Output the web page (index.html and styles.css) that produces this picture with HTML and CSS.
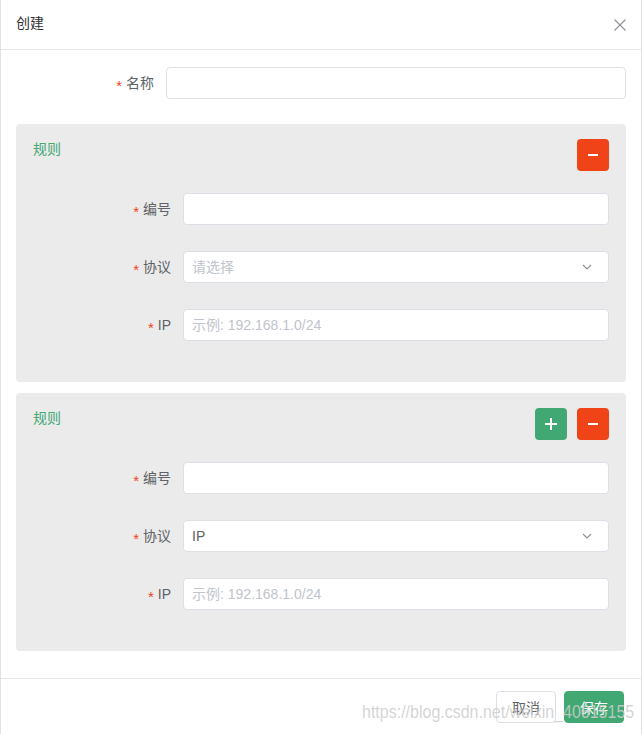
FILE: index.html
```html
<!DOCTYPE html>
<html lang="zh-CN">
<head>
<meta charset="utf-8">
<title>创建</title>
<link rel="stylesheet" href="styles.css">
</head>
<body>
<div class="dialog">
  <div class="dialog-header">
    <span class="dialog-title">创建</span>
    <span class="close" aria-label="关闭">
      <svg width="12" height="12" viewBox="0 0 12 12"><path d="M0.5 0.5 L11.5 11.5 M11.5 0.5 L0.5 11.5" stroke="#909399" stroke-width="1.2" fill="none"/></svg>
    </span>
  </div>
  <div class="dialog-body">
    <div class="form-item top-item">
      <label class="label"><span class="req">*</span><span>名称</span></label>
      <div class="control"><div class="input"></div></div>
    </div>

    <div class="card">
      <div class="card-head">
        <span class="card-title">规则</span>
        <div class="card-actions">
          <span class="btn-icon danger"><svg width="12" height="12" viewBox="0 0 12 12"><path d="M1 6 H11" stroke="#fff" stroke-width="2"/></svg></span>
        </div>
      </div>
      <div class="form-item">
        <label class="label"><span class="req">*</span><span>编号</span></label>
        <div class="control"><div class="input"></div></div>
      </div>
      <div class="form-item">
        <label class="label"><span class="req">*</span><span>协议</span></label>
        <div class="control"><div class="input select"><span class="placeholder">请选择</span><svg class="chev" width="10" height="6" viewBox="0 0 10 6"><path d="M1 1 L5 5 L9 1" stroke="#909399" stroke-width="1.2" fill="none"/></svg></div></div>
      </div>
      <div class="form-item">
        <label class="label"><span class="req">*</span><span>IP</span></label>
        <div class="control"><div class="input"><span class="placeholder">示例: 192.168.1.0/24</span></div></div>
      </div>
    </div>

    <div class="card">
      <div class="card-head">
        <span class="card-title">规则</span>
        <div class="card-actions">
          <span class="btn-icon success"><svg width="12" height="12" viewBox="0 0 12 12"><path d="M0 6 H12 M6 0 V12" stroke="#fff" stroke-width="2"/></svg></span>
          <span class="btn-icon danger"><svg width="12" height="12" viewBox="0 0 12 12"><path d="M1 6 H11" stroke="#fff" stroke-width="2"/></svg></span>
        </div>
      </div>
      <div class="form-item">
        <label class="label"><span class="req">*</span><span>编号</span></label>
        <div class="control"><div class="input"></div></div>
      </div>
      <div class="form-item">
        <label class="label"><span class="req">*</span><span>协议</span></label>
        <div class="control"><div class="input select"><span class="value">IP</span><svg class="chev" width="10" height="6" viewBox="0 0 10 6"><path d="M1 1 L5 5 L9 1" stroke="#909399" stroke-width="1.2" fill="none"/></svg></div></div>
      </div>
      <div class="form-item">
        <label class="label"><span class="req">*</span><span>IP</span></label>
        <div class="control"><div class="input"><span class="placeholder">示例: 192.168.1.0/24</span></div></div>
      </div>
    </div>
  </div>
  <div class="dialog-footer">
    <button class="btn">取消</button>
    <button class="btn primary">保存</button>
  </div>
  <div class="watermark">https://blog.csdn.net/weixin_40615155</div>
</div>
</body>
</html>
```

FILE: styles.css
```css
* { box-sizing: border-box; }
html, body {
  margin: 0;
  padding: 0;
  background: #fff;
}
body {
  font-family: "Liberation Sans", "Noto Sans CJK SC", sans-serif;
  font-size: 14px;
  color: #606266;
}
.dialog {
  position: relative;
  width: 642px;
  min-height: 760px;
  border: 1px solid #e2e2e2;
  border-top: none;
  border-bottom: none;
  background: #fff;
}
.dialog-header {
  height: 50px;
  padding: 0 15px 3px 15px;
  display: flex;
  align-items: center;
  justify-content: space-between;
  border-bottom: 1px solid #e6e6e6;
}
.dialog-title {
  font-size: 14px;
  color: #303133;
  line-height: 20px;
}
.close {
  display: flex;
  width: 12px;
  height: 12px;
  margin-top: 3px;
}
.dialog-body {
  padding: 17px 15px 16px 15px;
}
.form-item {
  display: grid;
  grid-template-columns: 150px 1fr;
  margin-bottom: 26px;
}
.top-item {
  margin-bottom: 25px;
}
.label {
  display: flex;
  justify-content: flex-end;
  align-items: center;
  height: 32px;
  padding-right: 12px;
  line-height: 20px;
  color: #606266;
  font-size: 14px;
}
.req {
  color: #f0441a;
  margin-right: 4px;
  font-size: 15px;
  line-height: 14px;
  margin-top: 6px;
}
.input {
  height: 32px;
  border: 1px solid #dcdfe6;
  border-radius: 4px;
  background: #fff;
  padding: 0 8px;
  display: flex;
  align-items: center;
  justify-content: space-between;
  line-height: 30px;
}
.placeholder {
  color: #c0c4cc;
}
.value {
  color: #606266;
}
.chev {
  margin-right: 8px;
}
.card {
  background: #ebebeb;
  border-radius: 4px;
  padding: 15px 17px 15px 17px;
  margin-bottom: 11px;
}
.card-head {
  display: flex;
  justify-content: space-between;
  align-items: flex-start;
  height: 32px;
  margin-bottom: 22px;
}
.card-title {
  color: #41a873;
  font-size: 14px;
  line-height: 20px;
}
.card-actions {
  display: flex;
  gap: 10px;
}
.btn-icon {
  width: 32px;
  height: 32px;
  border-radius: 4px;
  display: flex;
  align-items: center;
  justify-content: center;
}
.btn-icon.danger { background: #f04418; }
.btn-icon.success { background: #41a873; }
.dialog-footer {
  border-top: 1px solid #e6e6e6;
  padding: 12px 17px 12px 0;
  display: flex;
  justify-content: flex-end;
  gap: 8px;
}
.btn {
  width: 60px;
  height: 32px;
  border-radius: 4px;
  border: 1px solid #dcdfe6;
  background: #fff;
  color: #606266;
  font-family: "Liberation Sans", "Noto Sans CJK SC", sans-serif;
  font-size: 14px;
  padding: 0;
}
.btn.primary {
  background: #41a873;
  border-color: #41a873;
  color: #fff;
}
.watermark {
  position: absolute;
  left: 361px;
  top: 704px;
  font-family: "Liberation Sans", sans-serif;
  font-size: 16px;
  line-height: 20px;
  color: rgba(205, 205, 205, 0.85);
  white-space: nowrap;
  transform: scaleY(1.2);
  transform-origin: left bottom;
  pointer-events: none;
}
```
